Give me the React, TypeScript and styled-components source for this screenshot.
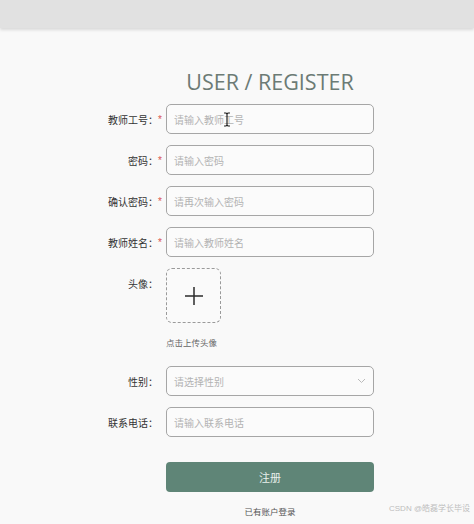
import React from "react";
import styled, { createGlobalStyle } from "styled-components";

const GlobalStyle = createGlobalStyle`
  html, body { margin: 0; padding: 0; }
  body {
    background: #f9f9f9;
    font-family: "Noto Sans CJK SC", "Open Sans", sans-serif;
  }
  * { box-sizing: border-box; }
`;

const Page = styled.div`
  position: relative;
  width: 474px;
  height: 524px;
  overflow: hidden;
  background: #f9f9f9;
`;

const TopBar = styled.div`
  height: 28px;
  background: #e1e1e1;
  box-shadow: 0 2px 3px rgba(0, 0, 0, 0.13);
`;

const Form = styled.div`
  width: 274px;
  margin: 37px auto 0;
  display: flex;
  flex-direction: column;
  gap: 11px;
`;

const Row = styled.div`
  display: grid;
  grid-template-columns: 66px 208px;
  align-items: start;
`;

const Title = styled.h1`
  grid-column: 2;
  margin: 2px 0 -4px;
  text-align: center;
  font-family: "Open Sans", sans-serif;
  font-weight: 400;
  font-size: 21.5px;
  line-height: 30px;
  color: #6c7b75;
`;

const Label = styled.label`
  display: flex;
  justify-content: flex-end;
  align-items: center;
  height: 30px;
  font-size: 10px;
  color: #333;
  white-space: nowrap;
`;

const Star = styled.span<{ $show: boolean }>`
  width: 8px;
  color: #d9534f;
  font-family: "Liberation Sans", sans-serif;
  font-size: 10px;
  visibility: ${(p) => (p.$show ? "visible" : "hidden")};
`;

const Box = styled.div`
  position: relative;
  height: 30px;
  border: 1px solid #a6a6a6;
  border-radius: 5px;
  background: #fbfbfb;
  display: flex;
  align-items: center;
  padding: 0 7px;
`;

const Input = styled.input`
  border: none;
  outline: none;
  background: transparent;
  width: 100%;
  font-family: "Noto Sans CJK SC", sans-serif;
  font-size: 10px;
  color: #333;
  padding: 0;
  &::placeholder { color: #b3b3b3; }
`;

const SelectText = styled.span`
  flex: 1;
  font-size: 10px;
  color: #b3b3b3;
`;

const Uploader = styled.div`
  width: 55px;
  height: 55px;
  border: 1px dashed #9a9a9a;
  border-radius: 6px;
  display: flex;
  align-items: center;
  justify-content: center;
  background: #fafafa;
`;

const Hint = styled.div`
  margin-top: 12px;
  padding-bottom: 6px;
  font-size: 8.5px;
  line-height: 14px;
  color: #666;
`;

const Column = styled.div`
  display: flex;
  flex-direction: column;
`;

const Submit = styled.button`
  grid-column: 2;
  margin-top: 14px;
  height: 30px;
  border: none;
  border-radius: 4px;
  background: #5f8577;
  color: #e9f0ec;
  font-family: "Noto Sans CJK SC", sans-serif;
  font-size: 11px;
`;

const LoginLink = styled.div`
  grid-column: 2;
  margin-top: 1px;
  text-align: center;
  font-size: 8.5px;
  line-height: 14px;
  color: #555;
`;

const Watermark = styled.div`
  position: absolute;
  right: 4px;
  bottom: 11px;
  font-size: 8px;
  color: #bdbdbd;
  font-family: "Liberation Sans", "Noto Sans CJK SC", sans-serif;
`;

const Cursor = styled.svg`
  position: absolute;
  left: 56px;
  top: 7px;
`;

type FieldProps = {
  label: string;
  required?: boolean;
  children: React.ReactNode;
};

const Field = ({ label, required = false, children }: FieldProps) => (
  <Row>
    <Label>
      {label}：<Star $show={required}>*</Star>
    </Label>
    {children}
  </Row>
);

export default function App() {
  return (
    <Page>
      <GlobalStyle />
      <TopBar />
      <Form>
        <Row>
          <Title>USER / REGISTER</Title>
        </Row>
        <Field label="教师工号" required>
          <Box>
            <Input placeholder="请输入教师工号" />
            <Cursor width="8" height="15" viewBox="0 0 8 15">
              <path d="M1 1h2l1 1 1-1h2M4 2v11M1 14h2l1-1 1 1h2" fill="none" stroke="#222" strokeWidth="1.2" />
            </Cursor>
          </Box>
        </Field>
        <Field label="密码" required>
          <Box>
            <Input type="text" placeholder="请输入密码" />
          </Box>
        </Field>
        <Field label="确认密码" required>
          <Box>
            <Input type="text" placeholder="请再次输入密码" />
          </Box>
        </Field>
        <Field label="教师姓名" required>
          <Box>
            <Input placeholder="请输入教师姓名" />
          </Box>
        </Field>
        <Field label="头像">
          <Column>
            <Uploader>
              <svg width="20" height="20" viewBox="0 0 20 20">
                <path d="M10 1v18M1 10h18" stroke="#2b2b2b" strokeWidth="1.5" />
              </svg>
            </Uploader>
            <Hint>点击上传头像</Hint>
          </Column>
        </Field>
        <Field label="性别">
          <Box>
            <SelectText>请选择性别</SelectText>
            <svg width="9" height="6" viewBox="0 0 9 6">
              <path d="M1 1l3.5 3.5L8 1" fill="none" stroke="#bbb" strokeWidth="1" />
            </svg>
          </Box>
        </Field>
        <Field label="联系电话">
          <Box>
            <Input placeholder="请输入联系电话" />
          </Box>
        </Field>
        <Row>
          <Submit>注册</Submit>
        </Row>
        <Row>
          <LoginLink>已有账户登录</LoginLink>
        </Row>
      </Form>
      <Watermark>CSDN @皓磊学长毕设</Watermark>
    </Page>
  );
}
